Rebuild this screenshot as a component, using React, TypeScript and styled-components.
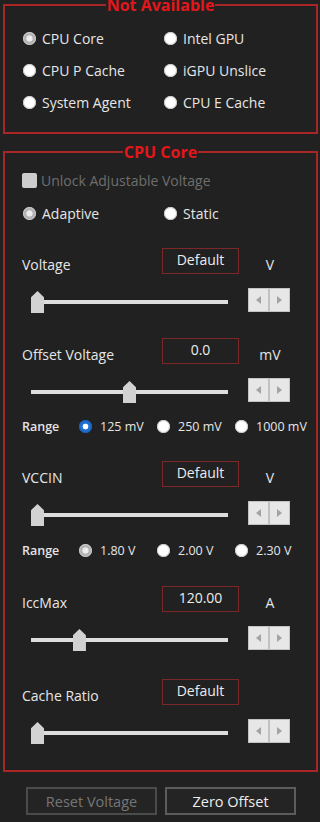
import React from "react";
import styled, { createGlobalStyle } from "styled-components";

const GlobalStyle = createGlobalStyle`
  html, body { margin: 0; padding: 0; background: #212121; }
  body { font-family: "Open Sans", "Noto Sans", sans-serif; color: #e4e4e4; }
`;

const Page = styled.div`
  width: 320px;
  height: 822px;
  background: #212121;
  overflow: hidden;
`;

const Group = styled.fieldset<{ $top: number; $bottom: number }>`
  margin: ${(p) => p.$top}px 2px 0 3px;
  padding: 0 0 ${(p) => p.$bottom}px 0;
  border: 2px solid #a82626;
  min-width: 0;
`;

const Title = styled.legend`
  margin: 0 auto;
  padding: 0 1px;
  font-size: 16px;
  font-weight: 700;
  line-height: 16px;
  color: #e3161b;
`;

const ChoiceGrid = styled.div<{ $top: number; $row: number }>`
  display: grid;
  grid-template-columns: 141px 1fr;
  grid-auto-rows: ${(p) => p.$row}px;
  margin-top: ${(p) => p.$top}px;
  padding-left: 18px;
`;

type DotState = "off" | "dim" | "on";

const Dot = styled.span<{ $state: DotState }>`
  width: 13px;
  height: 13px;
  border-radius: 50%;
  flex: none;
  background: ${(p) =>
    p.$state === "on"
      ? "radial-gradient(circle, #ffffff 0 2.6px, #1d6fd2 3.2px)"
      : p.$state === "dim"
      ? "radial-gradient(circle, #ececec 0 2.8px, #b3b3b3 3.4px)"
      : "radial-gradient(circle at 50% 40%, #ffffff 0 50%, #e6e6e6 100%)"};
  box-shadow: inset 0 0 0 1px ${(p) => (p.$state === "on" ? "#1a5fb4" : "#c8c8c8")};
`;

const Option = styled.label<{ $gap: number; $size: number }>`
  display: flex;
  align-items: center;
  gap: ${(p) => p.$gap}px;
  font-size: ${(p) => p.$size}px;
  color: #e6e6e6;
  white-space: nowrap;
`;

const Radio = ({ label, state = "off", gap = 6, size = 14 }: { label: string; state?: DotState; gap?: number; size?: number }) => (
  <Option $gap={gap} $size={size}>
    <Dot $state={state} />
    {label}
  </Option>
);

const CheckRow = styled.div`
  display: flex;
  align-items: center;
  height: 24px;
  margin-top: 8px;
  padding-left: 17px;
  gap: 4px;
  font-size: 14px;
  color: #6e6e6e;
`;

const CheckBox = styled.span`
  width: 15px;
  height: 15px;
  border-radius: 2px;
  background: #cdcdcd;
`;

const Section = styled.div<{ $top: number }>`
  margin-top: ${(p) => p.$top}px;
`;

const Header = styled.div`
  display: grid;
  grid-template-columns: 140px 77px 62px;
  align-items: center;
  height: 26px;
  padding-left: 17px;
`;

const Label = styled.span`
  font-size: 14px;
  padding-top: 6px;
  color: #e6e6e6;
`;

const ValueBox = styled.div`
  box-sizing: border-box;
  height: 26px;
  border: 1.5px solid #7c2828;
  text-align: center;
  font-size: 14px;
  line-height: 21px;
  color: #ececec;
`;

const Unit = styled.span`
  text-align: center;
  font-size: 14px;
  padding-top: 6px;
`;

const SliderRow = styled.div`
  display: flex;
  height: 24px;
  margin-top: 14px;
  padding-left: 26px;
`;

const SliderBox = styled.div`
  position: relative;
  width: 197px;
  height: 24px;
`;

const Rail = styled.div`
  margin-top: 12px;
  height: 4px;
  background: #dedede;
`;

const Thumb = styled.div`
  position: absolute;
  top: 3px;
  width: 13px;
  height: 22px;
  background: #d2d2d2;
  clip-path: polygon(50% 0, 100% 28%, 100% 100%, 0 100%, 0 28%);
`;

const Arrows = styled.div`
  display: flex;
  margin-left: 20px;
`;

const ArrowBtn = styled.div`
  box-sizing: border-box;
  width: 21px;
  height: 24px;
  background: #e7e7e7;
  border: 1px solid #c2c2c2;
  display: flex;
  align-items: center;
  justify-content: center;
`;

const Slider = ({ value }: { value: number }) => (
  <SliderRow>
    <SliderBox>
      <Rail />
      <Thumb style={{ left: `${value * 184}px` }} />
    </SliderBox>
    <Arrows>
      <ArrowBtn>
        <svg width="5" height="8" viewBox="0 0 5 8">
          <polygon points="5,0 5,8 0,4" fill="#a3a3a3" />
        </svg>
      </ArrowBtn>
      <ArrowBtn>
        <svg width="5" height="8" viewBox="0 0 5 8">
          <polygon points="0,0 0,8 5,4" fill="#a3a3a3" />
        </svg>
      </ArrowBtn>
    </Arrows>
  </SliderRow>
);

const Setting = ({ top, label, value, unit, pos }: { top: number; label: string; value: string; unit: string; pos: number }) => (
  <Section $top={top}>
    <Header>
      <Label>{label}</Label>
      <ValueBox>{value}</ValueBox>
      <Unit>{unit}</Unit>
    </Header>
    <Slider value={pos} />
  </Section>
);

const RangeRow = styled.div<{ $top: number }>`
  display: flex;
  align-items: center;
  height: 24px;
  margin-top: ${(p) => p.$top}px;
  padding-left: 17px;
`;

const RangeLabel = styled.span`
  width: 57px;
  font-size: 12.5px;
  font-weight: 600;
`;

const RangeCell = styled.div`
  width: 78px;
`;

const Range = ({ top, options, selected, active }: { top: number; options: string[]; selected: number; active: boolean }) => (
  <RangeRow $top={top}>
    <RangeLabel>Range</RangeLabel>
    {options.map((o, i) => (
      <RangeCell key={o}>
        <Radio label={o} gap={8} size={12.5} state={i === selected ? (active ? "on" : "dim") : "off"} />
      </RangeCell>
    ))}
  </RangeRow>
);

const Footer = styled.div`
  display: flex;
  gap: 8px;
  margin-top: 15px;
  padding-left: 26px;
`;

const Button = styled.button<{ $disabled?: boolean }>`
  box-sizing: border-box;
  width: 131px;
  height: 28px;
  background: #242424;
  border: 2px solid ${(p) => (p.$disabled ? "#4b4b4b" : "#5c5c5c")};
  color: ${(p) => (p.$disabled ? "#767676" : "#ececec")};
  font-family: inherit;
  font-size: 14.5px;
  padding: 0;
`;

export default function App() {
  return (
    <Page>
      <GlobalStyle />
      <Group $top={-3} $bottom={14}>
        <Title>Not Available</Title>
        <ChoiceGrid $top={9} $row={32}>
          <Radio label="CPU Core" state="dim" />
          <Radio label="Intel GPU" />
          <Radio label="CPU P Cache" />
          <Radio label="iGPU Unslice" />
          <Radio label="System Agent" />
          <Radio label="CPU E Cache" />
        </ChoiceGrid>
      </Group>
      <Group $top={10} $bottom={27}>
        <Title>CPU Core</Title>
        <CheckRow>
          <CheckBox />
          Unlock Adjustable Voltage
        </CheckRow>
        <ChoiceGrid $top={9} $row={24}>
          <Radio label="Adaptive" state="dim" />
          <Radio label="Static" />
        </ChoiceGrid>
        <Setting top={23} label="Voltage" value="Default" unit="V" pos={0} />
        <Setting top={26} label="Offset Voltage" value="0.0" unit="mV" pos={0.5} />
        <Range top={12} options={["125 mV", "250 mV", "1000 mV"]} selected={0} active />
        <Setting top={23} label="VCCIN" value="Default" unit="V" pos={0} />
        <Range top={13} options={["1.80 V", "2.00 V", "2.30 V"]} selected={0} active={false} />
        <Setting top={24} label="IccMax" value="120.00" unit="A" pos={0.228} />
        <Setting top={29} label="Cache Ratio" value="Default" unit="" pos={0} />
      </Group>
      <Footer>
        <Button $disabled>Reset Voltage</Button>
        <Button>Zero Offset</Button>
      </Footer>
    </Page>
  );
}
